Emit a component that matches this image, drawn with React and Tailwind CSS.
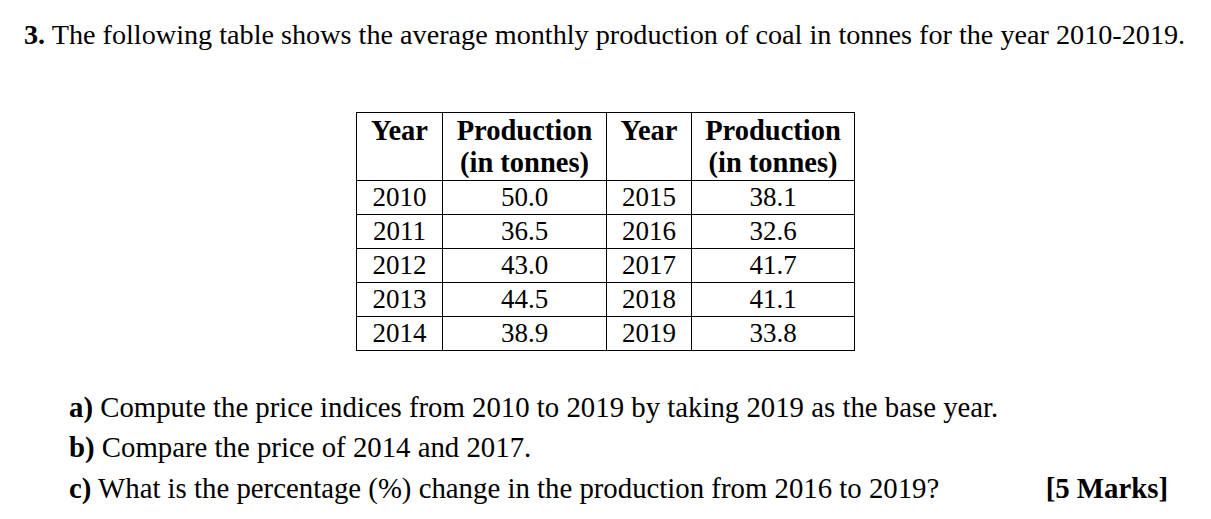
export default function App() {
  const rows = [
    ["2010", "50.0", "2015", "38.1"],
    ["2011", "36.5", "2016", "32.6"],
    ["2012", "43.0", "2017", "41.7"],
    ["2013", "44.5", "2018", "41.1"],
    ["2014", "38.9", "2019", "33.8"],
  ];
  return (
    <div
      className="w-[1211px] h-[519px] bg-white text-black overflow-hidden"
      style={{ fontFamily: '"Liberation Serif", "Times New Roman", serif' }}
    >
      <p className="pl-[24px] pt-[17px] text-[28.2px] leading-[36px] whitespace-nowrap">
        <span className="font-bold">3.</span> The following table shows the average monthly production of coal in tonnes for the year 2010-2019.
      </p>
      <div className="pl-[356px] pt-[59px]">
        <table className="border-collapse text-[27px] leading-[32px]">
          <thead>
            <tr className="font-bold text-[28.5px]">
              <th className="w-[86px] border border-black align-top font-bold pt-[2px] pb-[1px]">Year</th>
              <th className="w-[164px] border border-black align-top font-bold pt-[2px] pb-[1px]">
                Production
                <br />
                (in tonnes)
              </th>
              <th className="w-[85px] border border-black align-top font-bold pt-[2px] pb-[1px]">Year</th>
              <th className="w-[163px] border border-black align-top font-bold pt-[2px] pb-[1px]">
                Production
                <br />
                (in tonnes)
              </th>
            </tr>
          </thead>
          <tbody>
            {rows.map((r) => (
              <tr key={r[0]} className="h-[34px]">
                <td className="border border-black text-center py-0 leading-[31px]">{r[0]}</td>
                <td className="border border-black text-center py-0 leading-[31px]">{r[1]}</td>
                <td className="border border-black text-center py-0 leading-[31px]">{r[2]}</td>
                <td className="border border-black text-center py-0 leading-[31px]">{r[3]}</td>
              </tr>
            ))}
          </tbody>
        </table>
      </div>
      <div className="pl-[69px] pt-[36px] text-[28.8px] leading-[40px]">
        <p className="whitespace-nowrap">
          <span className="font-bold">a)</span> Compute the price indices from 2010 to 2019 by taking 2019 as the base year.
        </p>
        <p className="whitespace-nowrap">
          <span className="font-bold">b)</span> Compare the price of 2014 and 2017.
        </p>
        <div className="flex w-[1099px] justify-between whitespace-nowrap pt-[1px]">
          <p>
            <span className="font-bold">c)</span> What is the percentage (%) change in the production from 2016 to 2019?
          </p>
          <p className="font-bold">[5 Marks]</p>
        </div>
      </div>
    </div>
  );
}
